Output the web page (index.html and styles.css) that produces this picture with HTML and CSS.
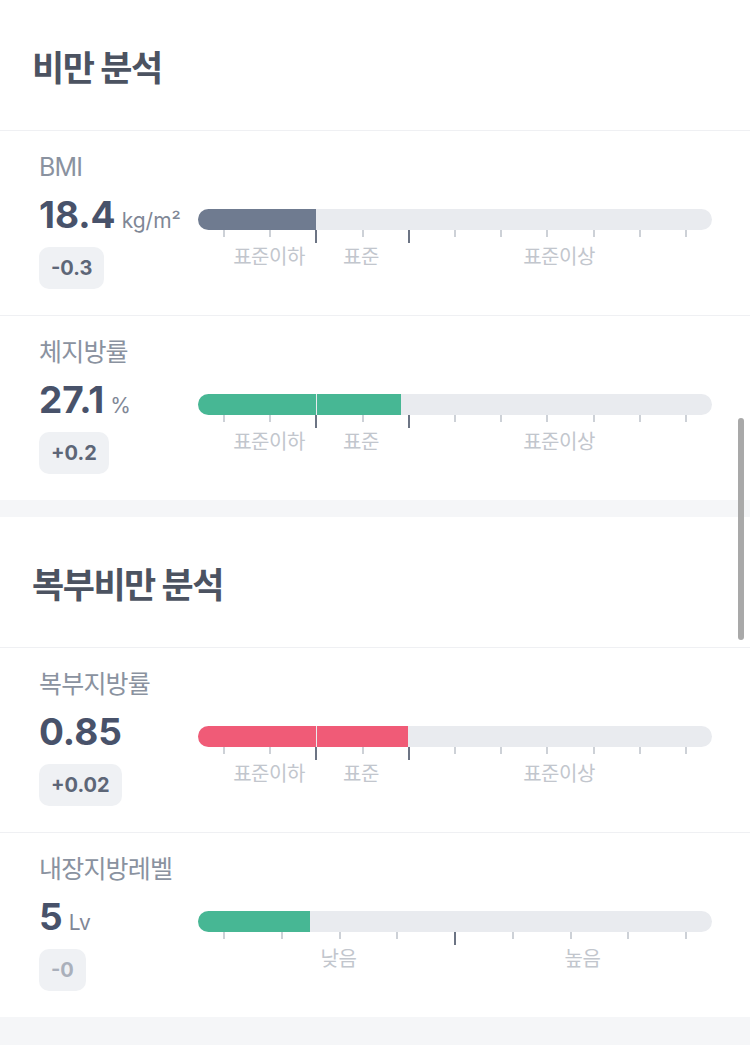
FILE: index.html
```html
<!DOCTYPE html>
<html lang="ko">

<head>
  <meta charset="UTF-8" />
  <meta name="viewport" content="width=device-width, initial-scale=1.0"/>
  <title>비만 분석</title>
  <link rel="stylesheet" href="styles.css">
</head>

<body>
  <div class="section">
    <div class="section-head">
      <h2>비만 분석</h2>
    </div>
    <div id="obesity"></div>
  </div>

  <div class="section">
    <div class="section-head">
      <h2>복부비만 분석</h2>
    </div>
    <div id="abdominal"></div>
  </div>

  <div class="scroll-indicator"></div>

  <script>
    const standard = [['표준이하', 92], ['표준', 92], ['표준이상', 304]];

    const obesity = [
      { name: 'BMI', value: '18.4', unit: 'kg/m²', diff: '-0.3', color: '#6f7b90', fill: [118], ticks: 11, major: [2, 4], labels: standard },
      { name: '체지방률', value: '27.1', unit: '%', diff: '+0.2', color: '#47b794', fill: [118, 84], ticks: 11, major: [2, 4], labels: standard }
    ];

    const abdominal = [
      { name: '복부지방률', value: '0.85', unit: '', diff: '+0.02', color: '#f05b77', fill: [118, 91], ticks: 11, major: [2, 4], labels: standard },
      { name: '내장지방레벨', value: '5', unit: 'Lv', diff: '-0', zero: true, color: '#47b794', fill: [112], ticks: 9, major: [4], labels: [['낮음', 231], ['높음', 257]] }
    ];

    function renderMetric(m) {
      let fill = m.fill.map(w => `<div class="fill" style="width:${w}px;background:${m.color}"></div>`).join('');
      let ticks = '';
      for (let i = 0; i < m.ticks; i++) {
        ticks += `<div class="tick ${m.major.includes(i) ? 'major' : ''}"></div>`;
      }
      let labels = m.labels.map(l => `<span style="width:${l[1]}px">${l[0]}</span>`).join('');

      return `
        <div class="metric">
          <div class="metric-name">${m.name}</div>
          <div class="metric-main">
            <div class="metric-left">
              <div class="value">
                <span class="value-num">${m.value}</span>
                ${m.unit ? `<span class="value-unit">${m.unit}</span>` : ''}
              </div>
              <div class="diff ${m.zero ? 'zero' : ''}">${m.diff}</div>
            </div>
            <div class="chart">
              <div class="bar">${fill}</div>
              <div class="ticks">${ticks}</div>
              <div class="scale">${labels}</div>
            </div>
          </div>
        </div>
      `;
    }

    document.getElementById('obesity').innerHTML = obesity.map(renderMetric).join('');
    document.getElementById('abdominal').innerHTML = abdominal.map(renderMetric).join('');
  </script>
</body>
</html>
```

FILE: styles.css
```css
body {
  font-family: 'Inter', 'Noto Sans CJK KR', sans-serif;
  margin: 0;
  padding: 0;
  background-color: #f5f6f8;
  color: #48526a;
}

.section {
  background-color: #fff;
}

.section + .section {
  margin-top: 17px;
}

.section-head {
  height: 130px;
  display: flex;
  align-items: center;
  padding-left: 32px;
}

h2 {
  margin: 0;
  font-size: 35px;
  font-weight: 700;
  color: #4c5361;
  letter-spacing: -1.5px;
}

.metric {
  border-top: 1px solid #eff0f3;
  padding: 20px 38px 26px 39px;
}

.metric-name {
  font-size: 25px;
  line-height: 32px;
  color: #8a92a0;
  letter-spacing: -0.8px;
}

.metric-main {
  display: flex;
  margin-top: 10px;
}

.metric-left {
  width: 159px;
  flex-shrink: 0;
}

.value {
  display: flex;
  align-items: baseline;
  gap: 6px;
  height: 44px;
}

.value-num {
  font-size: 37px;
  line-height: 44px;
  font-weight: 700;
  color: #48526a;
}

.value-unit {
  font-size: 21px;
  color: #7f8796;
}

.diff {
  display: inline-block;
  margin-top: 10px;
  height: 42px;
  line-height: 42px;
  padding: 0 12px;
  border-radius: 10px;
  background-color: #eff1f4;
  color: #5d6677;
  font-size: 20px;
  font-weight: 700;
}

.diff.zero {
  color: #aab0bb;
}

.chart {
  flex: 1;
  padding-top: 16px;
}

.bar {
  height: 21px;
  border-radius: 11px;
  background-color: #e9ebef;
  display: flex;
  gap: 1px;
  overflow: hidden;
}

.fill {
  height: 100%;
}

.ticks {
  display: flex;
  justify-content: space-between;
  padding: 0 25px;
  height: 13px;
}

.tick {
  width: 2px;
  height: 7px;
  background-color: #cdd1d7;
}

.tick.major {
  height: 13px;
  background-color: #6c7484;
}

.scale {
  display: flex;
  padding-left: 25px;
  margin-top: 2px;
}

.scale span {
  text-align: center;
  font-size: 20px;
  line-height: 24px;
  color: #c2c6cd;
  letter-spacing: -0.5px;
}

.scroll-indicator {
  position: fixed;
  top: 418px;
  right: 6px;
  width: 6px;
  height: 222px;
  border-radius: 3px;
  background-color: #a9a9a9;
}
```
